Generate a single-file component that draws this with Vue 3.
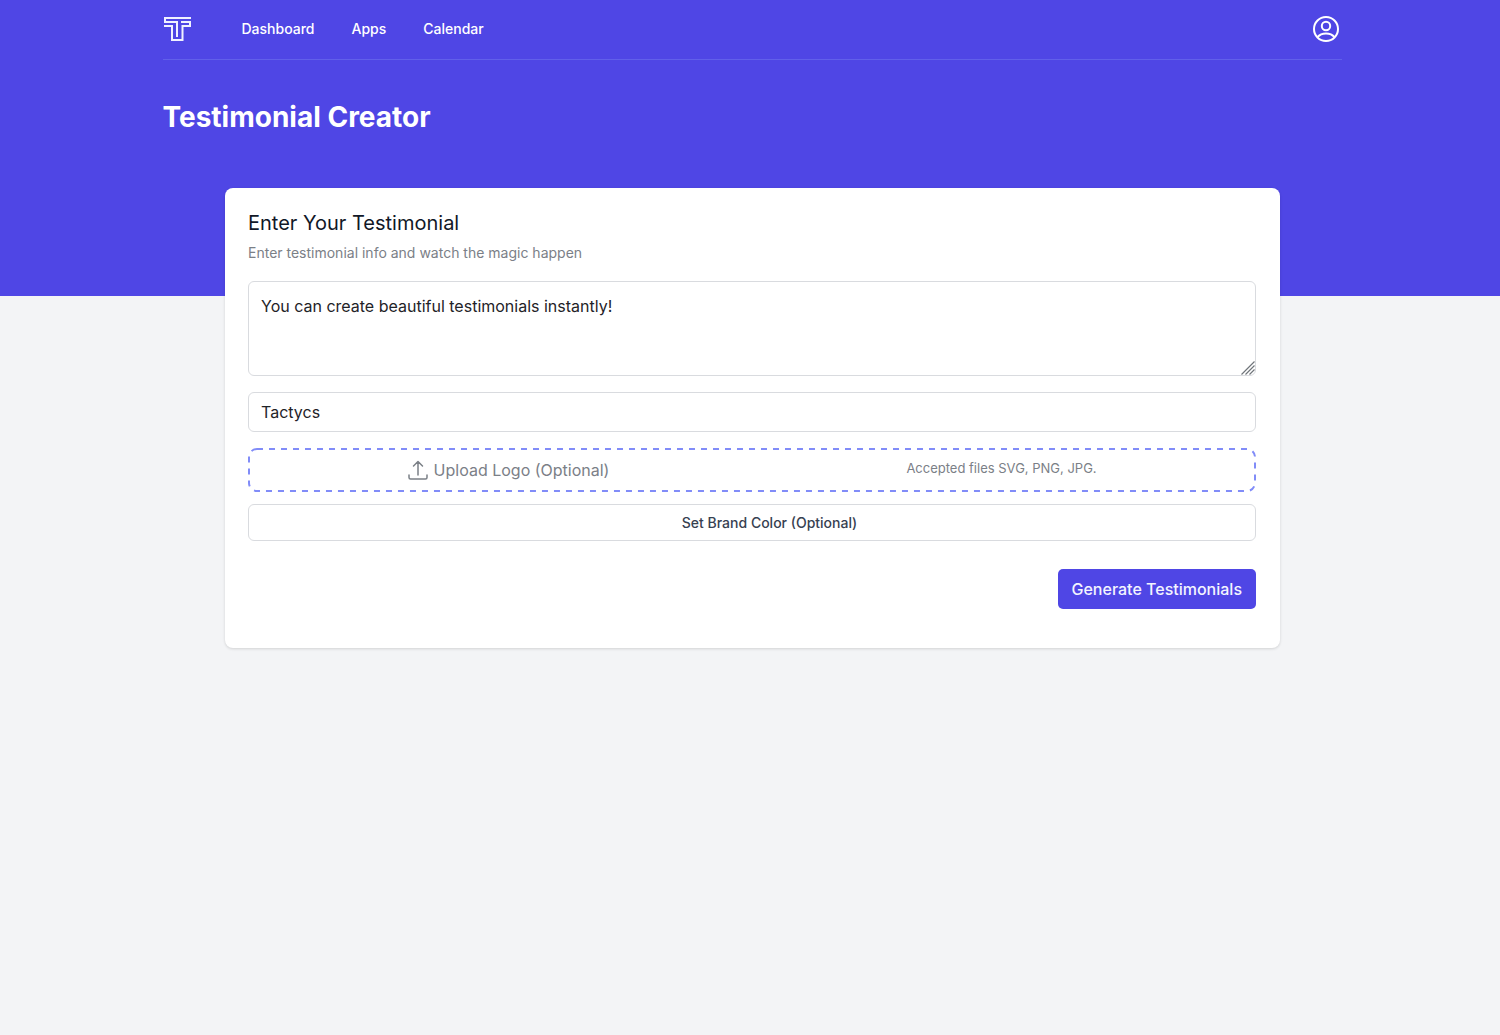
<script setup>
import { ref } from 'vue'

const links = ['Dashboard', 'Apps', 'Calendar']
const testimonial = ref('You can create beautiful testimonials instantly!')
const company = ref('Tactycs')
</script>

<template>
  <div class="page">
    <header class="hero">
      <div class="container">
        <nav class="navbar">
          <a class="brand" href="#" aria-label="Home">
            <svg width="28" height="26" viewBox="0 0 28 26" fill="none" stroke="currentColor" stroke-width="2">
              <path d="M28 2H2V6H14V21" />
              <path d="M1 10H9V24H19.500V10H27V6H18" />
            </svg>
          </a>
          <div class="links">
            <a v-for="link in links" :key="link" href="#">{{ link }}</a>
          </div>
          <button class="profile" type="button" aria-label="Account">
            <svg width="28" height="28" viewBox="0 0 28 28" fill="none" stroke="currentColor" stroke-width="2">
              <circle cx="14" cy="14" r="12" />
              <circle cx="14" cy="11" r="4.200" />
              <path d="M5.500 22.200C7.500 19.600 10.500 18.400 14 18.400S20.500 19.600 22.500 22.200" />
            </svg>
          </button>
        </nav>
        <h1>Testimonial Creator</h1>
      </div>
    </header>

    <main class="content">
      <form class="card" @submit.prevent>
        <h2>Enter Your Testimonial</h2>
        <p class="hint">Enter testimonial info and watch the magic happen</p>
        <div class="message-box">
          <textarea v-model="testimonial" class="field message" aria-label="Testimonial"></textarea>
          <svg class="grip" width="14" height="14" viewBox="0 0 14 14" fill="none" stroke="#70757a" stroke-width="1.200" aria-hidden="true">
            <path d="M0.500 13.500L13.500 0.500M4.500 13.500L13.500 4.500M8.500 13.500L13.500 8.500" />
          </svg>
        </div>
        <input v-model="company" class="field company" type="text" aria-label="Company" />
        <label class="upload">
          <svg class="outline" aria-hidden="true">
            <rect x="1" y="1" rx="8" />
          </svg>
          <input class="file" type="file" accept=".svg,.png,.jpg" />
          <span class="upload-title">
            <svg width="20" height="20" viewBox="0 0 20 20" fill="none" stroke="currentColor" stroke-width="1.500" stroke-linecap="round" stroke-linejoin="round">
              <path d="M10 15V1.500M5.500 6L10 1.500L14.500 6M1 15V17.500Q1 19 2.500 19H17.500Q19 19 19 17.500V15" />
            </svg>
            Upload Logo (Optional)
          </span>
          <span class="upload-types">Accepted files SVG, PNG, JPG.</span>
        </label>
        <button class="color" type="button">Set Brand Color (Optional)</button>
        <button class="generate" type="submit">Generate Testimonials</button>
      </form>
    </main>
  </div>
</template>

<style>
body {
  background: #f3f4f6;
}
</style>

<style scoped>
.page {
  font-family: Inter, "Liberation Sans", sans-serif;
  color: #111827;
}

.page * {
  box-sizing: border-box;
}

.hero {
  background: #4f46e5;
  color: #fff;
  padding: 0 24px 161px 28px;
}

.container {
  max-width: 1179px;
  margin: 0 auto;
}

.navbar {
  display: flex;
  align-items: center;
  height: 60px;
  padding-bottom: 1px;
  border-bottom: 1px solid #6160ea;
}

.brand {
  display: flex;
  color: #f0f1ff;
}

.links {
  display: flex;
  gap: 37px;
  margin-left: 51px;
}

.links a {
  color: #fff;
  font-size: 14px;
  font-weight: 500;
  line-height: 20px;
  text-decoration: none;
}

.profile {
  display: flex;
  margin-left: auto;
  padding: 0 2px;
  border: 0;
  background: none;
  color: #fff;
}

h1 {
  margin: 0;
  padding-top: 39px;
  font-size: 28px;
  font-weight: 700;
  line-height: 36px;
}

.content {
  margin-top: -108px;
  padding: 0 24px 32px 29px;
}

.card {
  display: flex;
  flex-direction: column;
  max-width: 1055px;
  margin: 0 auto;
  padding: 22px 24px 39px 23px;
  border-radius: 8px;
  background: #fff;
  box-shadow: 0 1px 3px rgba(0, 0, 0, 0.14);
}

h2 {
  margin: 0;
  font-size: 20px;
  font-weight: 400;
  line-height: 26px;
}

.hint {
  margin: 7px 0 18px;
  color: #7b8087;
  font-size: 14px;
  line-height: 20px;
}

.field {
  display: block;
  width: 100%;
  border: 1px solid #d9dbdf;
  border-radius: 6px;
  background: #fff;
  color: #1f2328;
  font-family: inherit;
  font-size: 16px;
  line-height: 24px;
  outline: 0;
}

.message-box {
  position: relative;
  margin-bottom: 16px;
}

.message {
  height: 95px;
  padding: 12px;
  resize: vertical;
}

.message::-webkit-resizer {
  display: none;
}

.grip {
  position: absolute;
  right: 1px;
  bottom: 1px;
  pointer-events: none;
}

.company {
  height: 40px;
  margin-bottom: 16px;
  padding: 0 12px;
}

.upload {
  position: relative;
  display: grid;
  grid-template-columns: 1fr 1fr;
  justify-items: center;
  height: 44px;
  margin-bottom: 12px;
  padding: 0 8px 0 14px;
  color: #7b8087;
}

.outline {
  position: absolute;
  inset: 0;
  width: 100%;
  height: 100%;
}

.outline rect {
  width: calc(100% - 2px);
  height: calc(100% - 2px);
  fill: none;
  stroke: #818cf8;
  stroke-width: 2px;
  stroke-dasharray: 6 6;
}

.file {
  position: absolute;
  inset: 0;
  width: 100%;
  opacity: 0;
}

.upload-title {
  display: flex;
  align-items: center;
  gap: 6px;
  font-size: 16px;
  line-height: 24px;
}

.upload-types {
  padding-top: 10px;
  font-size: 13px;
  line-height: 20px;
}

.color {
  height: 37px;
  padding: 0 0 0 35px;
  border: 1px solid #d9dbdf;
  border-radius: 6px;
  background: #fff;
  color: #374151;
  font-family: inherit;
  font-size: 14px;
  font-weight: 500;
}

.generate {
  align-self: flex-end;
  height: 40px;
  margin-top: 28px;
  padding: 0 14px;
  border: 0;
  border-radius: 5px;
  background: #4f46e5;
  color: #f3f4ff;
  font-family: inherit;
  font-size: 16px;
  font-weight: 500;
}
</style>
